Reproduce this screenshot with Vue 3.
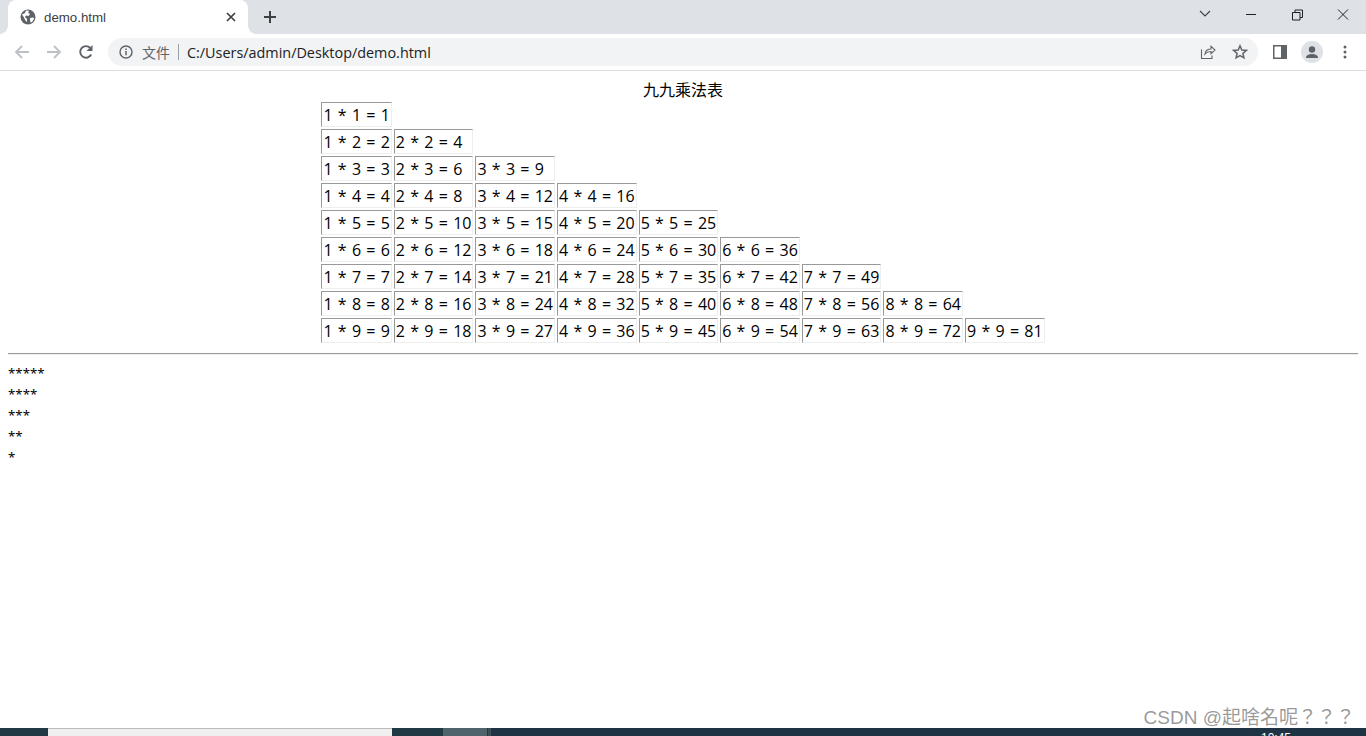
<script setup>
const rows = Array.from({ length: 9 }, (_, i) =>
  Array.from({ length: i + 1 }, (_, j) => `${j + 1} * ${i + 1} = ${(j + 1) * (i + 1)}`)
)
const stars = ['*****', '****', '***', '**', '*']
</script>

<template>
  <div class="window">
    <header class="tabbar">
      <div class="tab">
        <svg class="globe" width="16" height="16" viewBox="0 0 16 16">
          <circle cx="8" cy="8" r="7.5" fill="#5f6368" />
          <path d="M2 5.5 5 4l1-2.5 3 .2-.8 2L10 5 8.500 7 6 6.500l-1 1.500 2 2v3L5 11 4 8.500zM10 9l3.500-.5.500 1.500-2 3-1.500.5-.5-2.500z" fill="#fff" />
        </svg>
        <span class="tab-title">demo.html</span>
        <svg class="tab-close" width="10" height="10" viewBox="0 0 10 10">
          <path d="M1 1l8 8M9 1 1 9" stroke="#3c4043" stroke-width="1.700" />
        </svg>
      </div>
      <svg class="new-tab" width="14" height="14" viewBox="0 0 14 14">
        <path d="M7 1v12M1 7h12" stroke="#3c4043" stroke-width="2" />
      </svg>
      <div class="window-controls">
        <svg width="46" height="30" viewBox="0 0 46 30">
          <path d="M18 11l5 5 5-5" fill="none" stroke="#3c4043" stroke-width="1.100" />
        </svg>
        <svg width="46" height="30" viewBox="0 0 46 30">
          <path d="M18 14.500h10" stroke="#202124" stroke-width="1" />
        </svg>
        <svg width="46" height="30" viewBox="0 0 46 30">
          <path d="M18.500 12.500h7.500v7.500h-7.500zM21 12.500V10h7.500v7.500H26" fill="none" stroke="#202124" stroke-width="1" />
        </svg>
        <svg width="46" height="30" viewBox="0 0 46 30">
          <path d="M18 9.500l10 10M28 9.500l-10 10" stroke="#202124" stroke-width="1" />
        </svg>
      </div>
    </header>

    <nav class="toolbar">
      <svg class="nav-icon" width="16" height="16" viewBox="0 0 16 16">
        <path d="M15 8H2M8 2 2 8l6 6" fill="none" stroke="#bdc1c6" stroke-width="1.800" />
      </svg>
      <svg class="nav-icon" width="16" height="16" viewBox="0 0 16 16">
        <path d="M1 8h13M8 2l6 6-6 6" fill="none" stroke="#bdc1c6" stroke-width="1.800" />
      </svg>
      <svg class="nav-icon" width="16" height="16" viewBox="0 0 16 16">
        <path d="M13.200 10.500A5.800 5.800 0 1 1 12.300 4" fill="none" stroke="#5f6368" stroke-width="1.900" />
        <path d="M14.500 1v6h-6z" fill="#5f6368" />
      </svg>
      <div class="omnibox">
        <svg width="14" height="14" viewBox="0 0 14 14">
          <circle cx="7" cy="7" r="6" fill="none" stroke="#5f6368" stroke-width="1.400" />
          <path d="M7 6v4.200M7 3.500v1.500" stroke="#5f6368" stroke-width="1.500" />
        </svg>
        <span class="security">文件</span>
        <span class="divider"></span>
        <span class="url">C:/Users/admin/Desktop/demo.html</span>
        <svg class="share" width="16" height="16" viewBox="0 0 16 16">
          <path d="M1.500 5.500v9h10.500v-3M5 10c.5-3 2.500-5 6-5V2.200L15 6l-4 3.800V7.500c-2.500 0-4.500.7-6 2.500z" fill="none" stroke="#5f6368" stroke-width="1.100" />
        </svg>
        <svg class="star" width="16" height="16" viewBox="0 0 16 16">
          <path d="M8 1.800l1.800 4.200 4.500.4-3.400 3 1 4.400L8 11.500l-3.900 2.300 1-4.400-3.400-3 4.500-.4z" fill="none" stroke="#5f6368" stroke-width="1.500" />
        </svg>
      </div>
      <svg class="panel" width="14" height="14" viewBox="0 0 14 14">
        <path d="M0 0h14v14H0z" fill="#5f6368" />
        <path d="M1.500 1.500h6.500v11H1.500z" fill="#fff" />
      </svg>
      <svg class="avatar" width="22" height="22" viewBox="0 0 22 22">
        <circle cx="11" cy="11" r="11" fill="#dee1e6" />
        <circle cx="11" cy="8.500" r="3.200" fill="#5f6368" />
        <path d="M5 17c0-3 3-4 6-4s6 1 6 4z" fill="#5f6368" />
      </svg>
      <svg class="dots" width="4" height="14" viewBox="0 0 4 14">
        <circle cx="2" cy="2" r="1.500" fill="#5f6368" />
        <circle cx="2" cy="7" r="1.500" fill="#5f6368" />
        <circle cx="2" cy="12" r="1.500" fill="#5f6368" />
      </svg>
    </nav>

    <main class="page">
      <table class="times">
        <caption>九九乘法表</caption>
        <tbody>
          <tr v-for="(row, i) in rows" :key="i">
            <td v-for="cell in row" :key="cell">{{ cell }}</td>
          </tr>
        </tbody>
      </table>
      <hr class="rule" />
      <div class="stars">
        <div v-for="line in stars" :key="line">{{ line }}</div>
      </div>
    </main>

    <footer class="taskbar">
      <div class="task-light"></div>
      <div class="task-dark"></div>
      <div class="task-active"></div>
      <div class="task-sliver"></div>
      <div class="task-rest"><span class="clock">10:45</span></div>
    </footer>
    <div class="watermark">CSDN @起啥名呢？？？</div>
  </div>
</template>

<style>
html, body { margin: 0; overflow: hidden; background: #fff; }
</style>

<style scoped>
.window {
  position: relative;
  width: 1366px;
  height: 736px;
  display: flex;
  flex-direction: column;
  overflow: hidden;
  font-family: "Open Sans", "Noto Sans CJK SC", sans-serif;
  color: #000;
}
.tabbar {
  height: 34px;
  flex: none;
  background: #dee1e6;
  display: flex;
  align-items: flex-end;
}
.tab {
  position: relative;
  width: 240px;
  height: 34px;
  margin-left: 8px;
  background: #fff;
  border-radius: 8px 8px 0 0;
  display: flex;
  align-items: center;
  padding: 0 12px;
  box-sizing: border-box;
}
.tab::before,
.tab::after {
  content: "";
  position: absolute;
  bottom: 0;
  width: 8px;
  height: 8px;
}
.tab::before {
  left: -8px;
  background: radial-gradient(circle at 0 0, transparent 7.5px, #fff 8px);
}
.tab::after {
  right: -8px;
  background: radial-gradient(circle at 100% 0, transparent 7.5px, #fff 8px);
}
.tab-title {
  margin-left: 8px;
  flex: 1;
  font-size: 13.3px;
  color: #3c4043;
  font-family: "Liberation Sans", sans-serif;
}
.new-tab { margin: 0 0 10px 15px; }
.window-controls {
  margin-left: auto;
  align-self: flex-start;
  display: flex;
}
.window-controls svg { display: block; }
.toolbar {
  height: 36px;
  flex: none;
  background: #fff;
  border-bottom: 1px solid #dadce0;
  display: flex;
  align-items: center;
  padding-left: 14px;
}
.nav-icon { margin-right: 16px; flex: none; }
.omnibox {
  width: 1150px;
  height: 28px;
  margin-left: -2px;
  background: #f1f3f4;
  border-radius: 14px;
  display: flex;
  align-items: center;
  padding-left: 11px;
  box-sizing: border-box;
  flex: none;
}
.security {
  margin-left: 9px;
  font-size: 14px;
  color: #5f6368;
  font-family: "Noto Sans CJK SC", sans-serif;
}
.divider {
  width: 1px;
  height: 16px;
  background: #9aa0a6;
  margin: 0 8px;
}
.url {
  font-size: 14.4px;
  color: #202124;
  font-family: "Open Sans", sans-serif;
  flex: 1;
}
.share { margin-right: 16px; }
.star { margin-right: 10px; }
.panel { margin-left: 15px; flex: none; }
.avatar { margin-left: 14px; flex: none; }
.dots { margin-left: 20px; flex: none; }
.page {
  flex: 1;
  padding: 8px 8px 0;
  min-height: 0;
}
.times {
  margin: 0 auto;
  border-collapse: separate;
  border-spacing: 2px;
  font-size: 16px;
  word-spacing: 1.1px;
}
.times caption {
  text-align: center;
  font-family: "Noto Sans CJK SC", sans-serif;
  font-size: 16px;
  line-height: 21px;
}
.times td {
  padding: 2px 1px 0;
  line-height: 21px;
  white-space: nowrap;
  border: 1px solid;
  border-color: #999 #eee #eee #999;
}
.rule {
  margin: 8px 0;
  border: none;
  border-top: 1px solid #999;
  border-bottom: 1px solid #eee;
}
.stars {
  font-size: 13.3px;
  line-height: 21px;
  font-family: "Noto Sans", sans-serif;
}
.taskbar {
  height: 8px;
  flex: none;
  display: flex;
  background: #1f3945;
  overflow: hidden;
  padding-left: 48px;
}
.task-light {
  width: 344px;
  background: #f0f0f0;
  border-top: 1px solid #bbb;
  box-sizing: border-box;
}
.task-dark { width: 51px; }
.task-active { width: 44px; background: #4f636c; }
.task-sliver { width: 3px; margin-left: 1px; background: #3c4f59; }
.task-rest {
  flex: 1;
  background: #1e3444;
  position: relative;
}
.clock {
  position: absolute;
  left: 770px;
  top: 3px;
  font-size: 12px;
  line-height: 14px;
  color: #fff;
  font-family: "Liberation Sans", sans-serif;
}
.watermark {
  position: absolute;
  right: 11px;
  bottom: 6px;
  font-size: 19px;
  line-height: 24px;
  color: rgba(120, 120, 120, 0.75);
  font-family: "Liberation Sans", "Noto Sans CJK TC", sans-serif;
  white-space: nowrap;
}
</style>
